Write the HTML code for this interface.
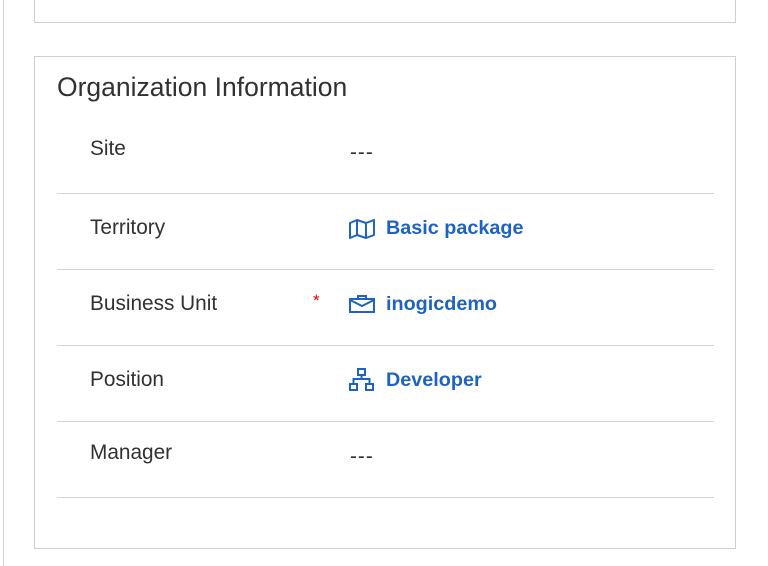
<!DOCTYPE html>
<html><head><style>
body{margin:0;width:768px;height:566px;background:#fff;position:relative;overflow:hidden;font-family:"Liberation Sans",sans-serif;}
.vl{position:absolute;left:3px;top:0;width:1px;height:566px;background:#d6d6d6}
.box{position:absolute;left:34px;width:702px;border:1px solid #cfcfcf;box-sizing:border-box}
.t{position:absolute;left:57px;top:72px;font-size:26.5px;color:#323130}
.lab{position:absolute;left:90px;font-size:20.8px;color:#323130}
.val{position:absolute;left:350px;font-size:20.8px;color:#323130;letter-spacing:1px}
.lnk{position:absolute;left:386px;font-size:19.8px;color:#1f63c0;font-weight:bold}
.hr{position:absolute;left:57px;width:657px;height:1px;background:#d4d4d4}
svg{position:absolute}
</style></head><body>
<div class="vl"></div>
<div class="box" style="top:-2px;height:25px"></div>
<div class="box" style="top:56px;height:493px"></div>
<div class="t">Organization Information</div>

<div class="lab" style="top:137px">Site</div>
<div class="val" style="top:141px">---</div>
<div class="hr" style="top:193px"></div>

<div class="lab" style="top:216px">Territory</div>
<svg style="left:349px;top:219px" width="26" height="20" viewBox="0 0 26 20" fill="none" stroke="#1f63c0" stroke-width="2" stroke-linejoin="round"><path d="M1 4 L8 1 L17 4 L25 1 V16 L17 19 L8 16 L1 19 Z M8 1 V16 M17 4 V19"/></svg>
<div class="lnk" style="top:217px">Basic package</div>
<div class="hr" style="top:269px"></div>

<div class="lab" style="top:292px">Business Unit</div>
<div style="position:absolute;left:313px;top:291px;color:#d00;font-size:17px">*</div>
<svg style="left:349px;top:295px" width="26" height="18" viewBox="0 0 26 18" fill="none" stroke="#1f63c0" stroke-width="2"><rect x="1" y="4" width="24" height="13"/><path d="M9 4 V1 H17 V4 M1 5 L13 11 L25 5"/></svg>
<div class="lnk" style="top:293px">inogicdemo</div>
<div class="hr" style="top:345px"></div>

<div class="lab" style="top:368px">Position</div>
<svg style="left:349px;top:368px" width="26" height="24" viewBox="0 0 26 24" fill="none" stroke="#1f63c0" stroke-width="2"><rect x="9" y="1" width="7" height="6"/><rect x="1" y="16" width="7" height="6"/><rect x="17" y="16" width="7" height="6"/><path d="M12.5 7 V11 M4.5 16 V11 H20.5 V16"/></svg>
<div class="lnk" style="top:369px">Developer</div>
<div class="hr" style="top:421px"></div>

<div class="lab" style="top:441px">Manager</div>
<div class="val" style="top:445px">---</div>
<div class="hr" style="top:497px"></div>
</body></html>
